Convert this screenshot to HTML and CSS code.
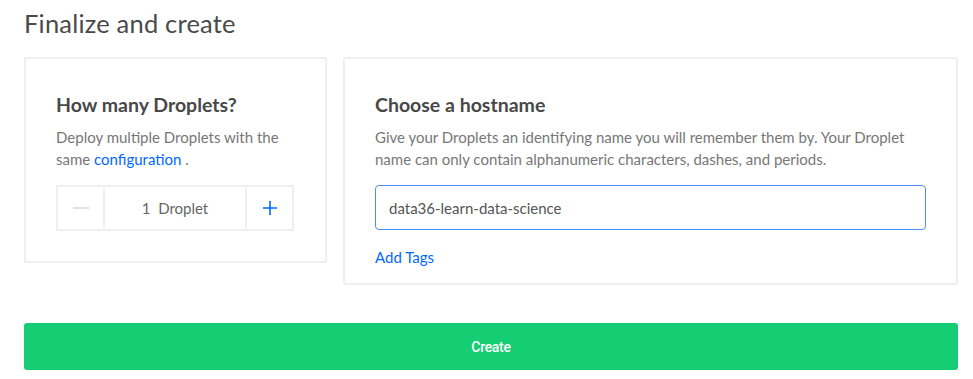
FILE: index.html
```html
<!DOCTYPE html>
<html>
<head>
<meta charset="utf-8">
<link rel="stylesheet" href="styles.css">
</head>
<body>
<h1 class="title">Finalize and create</h1>
<div class="cards">
  <div class="card card-left">
    <h2 class="card-title">How many Droplets?</h2>
    <p class="card-desc">Deploy multiple Droplets with the same <a class="link">configuration</a> .</p>
    <div class="stepper">
      <div class="step-btn minus"><span class="minus-bar"></span></div>
      <div class="step-value">1&nbsp; Droplet</div>
      <div class="step-btn plus">
        <svg width="16" height="16" viewBox="0 0 16 16"><path d="M8 1v14M1 8h14" stroke="#0069ff" stroke-width="1.6" fill="none"/></svg>
      </div>
    </div>
  </div>
  <div class="card card-right">
    <h2 class="card-title">Choose a hostname</h2>
    <p class="card-desc">Give your Droplets an identifying name you will remember them by. Your Droplet name can only contain alphanumeric characters, dashes, and periods.</p>
    <div class="input">data36-learn-data-science</div>
    <a class="link tags">Add Tags</a>
  </div>
</div>
<div class="create">Create</div>
</body>
</html>
```
FILE: styles.css
```css
* { box-sizing: border-box; }
body {
  margin: 0;
  padding: 8px 15px 0 24px;
  background: #fff;
  font-family: "Lato", "Open Sans", sans-serif;
  color: #444;
}
.title {
  margin: 0;
  font-size: 25.5px;
  font-weight: 400;
  color: #4a4a4a;
  line-height: 30px;
  letter-spacing: 0.2px;
}
.cards {
  display: flex;
  align-items: flex-start;
  gap: 16px;
  margin-top: 19px;
}
.card {
  border: 2px solid #efefef;
  border-radius: 2px;
  padding: 34px 30px 30px;
}
.card-left { width: 303px; height: 206px; }
.card-right { flex: 1; height: 228px; }
.card-title {
  margin: 0;
  font-size: 19.5px;
  font-weight: 700;
  color: #484848;
  line-height: 24px;
}
.card-desc {
  margin: 9px 0 15px;
  font-size: 15px;
  line-height: 22px;
  color: #777;
}
.link { color: #0069ff; text-decoration: none; }
.stepper {
  display: flex;
  width: 238px;
  height: 46px;
  border: 2px solid #efefef;
}
.step-btn {
  width: 45px;
  display: flex;
  align-items: center;
  justify-content: center;
}
.minus-bar { width: 16px; height: 2px; background: #e2e2e2; }
.step-value {
  flex: 1;
  border-left: 2px solid #efefef;
  border-right: 2px solid #efefef;
  display: flex;
  align-items: center;
  justify-content: center;
  font-size: 15px;
  color: #666;
}
.input {
  height: 45px;
  border: 1px solid #4a8ef5;
  border-radius: 4px;
  padding: 0 13px;
  display: flex;
  align-items: center;
  font-size: 15px;
  color: #555;
}
.tags {
  display: block;
  margin-top: 17px;
  font-size: 15px;
  line-height: 20px;
}
.create {
  margin-top: 38px;
  height: 47px;
  background: #15cd72;
  border-radius: 3px;
  display: flex;
  align-items: center;
  justify-content: center;
  color: #fff;
  font-family: "Roboto", sans-serif;
  font-size: 14px;
  font-weight: 500;
  letter-spacing: -0.3px;
}
```
